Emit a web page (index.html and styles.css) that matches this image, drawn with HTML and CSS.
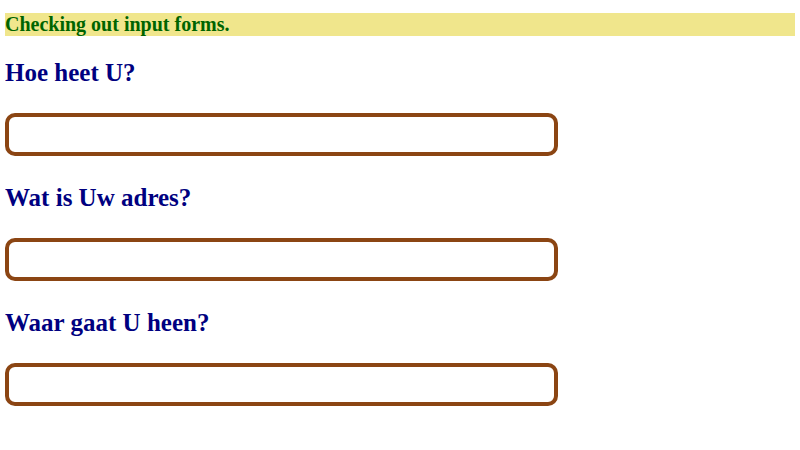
FILE: index.html
```html
<!DOCTYPE html>
<html>
<head>
<meta charset="utf-8">
<link rel="stylesheet" href="styles.css">
</head>
<body>
<p class="banner">Checking out input forms.</p>
<form class="form">
  <h2 class="question">Hoe heet U?</h2>
  <input class="field" type="text">
  <h2 class="question">Wat is Uw adres?</h2>
  <input class="field" type="text">
  <h2 class="question">Waar gaat U heen?</h2>
  <input class="field" type="text">
</form>
</body>
</html>
```
FILE: styles.css
```css
html, body {
  background: #ffffff;
}
body {
  margin: 13px 5px 0 5px;
  font-family: "Liberation Serif", "Times New Roman", serif;
}
.banner {
  margin: 0;
  background: #f0e68c;
  color: #006400;
  font-weight: bold;
  font-size: 20px;
  line-height: 23px;
}
.form {
  margin: 0;
}
.question {
  margin: 22px 0 26px 0;
  color: #000080;
  font-size: 25px;
  font-weight: bold;
  line-height: 29px;
}
.field {
  display: block;
  box-sizing: border-box;
  width: 553px;
  height: 43px;
  margin: 0 0 27px 0;
  border: 4px solid #8b4513;
  border-radius: 10px;
  background: #ffffff;
  padding: 0 6px;
  font-family: "Liberation Serif", serif;
  font-size: 16px;
  outline: none;
}
```
